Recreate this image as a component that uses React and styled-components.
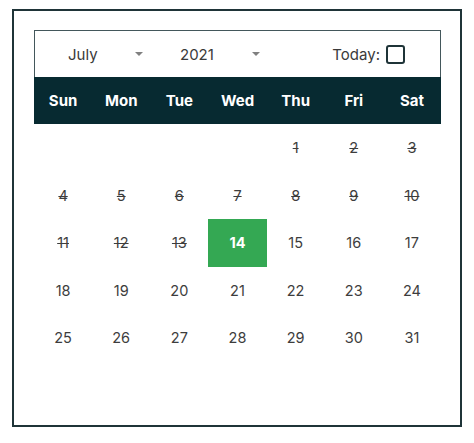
import styled, { createGlobalStyle } from "styled-components";

const GlobalStyle = createGlobalStyle`
    body {
        margin: 0;
        background: #ffffff;
        font-family: 'Inter', 'Liberation Sans', sans-serif;
    }
`

const Frame = styled.div`
    margin: 9px 0 0 12px;
    width: 450px;
    height: 418px;
    box-sizing: border-box;
    border: 2px solid #1f3438;
    padding: 19px 19px 0 20px;
    background: #fff;
`
const Header = styled.div`
    height: 47px;
    box-sizing: border-box;
    border: 1px solid #43575b;
    border-bottom: none;
    display: flex;
    align-items: center;
    padding-left: 33px;
    color: #3a3a3a;
    font-size: 15px;
`
const Select = styled.div`
    width: ${p => p.$width}px;
    margin-right: ${p => p.$gap || 0}px;
    display: flex;
    align-items: center;
    justify-content: space-between;
`
const Caret = styled.span`
    width: 0;
    height: 0;
    border-left: 4px solid transparent;
    border-right: 4px solid transparent;
    border-top: 4px solid #808080;
`
const Today = styled.label`
    margin-left: auto;
    margin-right: 35px;
    display: flex;
    align-items: center;
    gap: 6px;
`
const Checkbox = styled.span`
    width: 19px;
    height: 19px;
    box-sizing: border-box;
    border: 2px solid #1f3438;
    border-radius: 3px;
`
const WeekBar = styled.div`
    height: 47px;
    background: #072a31;
    display: grid;
    grid-template-columns: repeat(7, 1fr);
    align-items: center;
    color: #fff;
    font-weight: 700;
    font-size: 15px;
    text-align: center;
`
const Days = styled.div`
    display: grid;
    grid-template-columns: repeat(7, 1fr);
    grid-auto-rows: 47.5px;
`
const Day = styled.div`
    display: flex;
    align-items: center;
    justify-content: center;
    font-size: 14.5px;
    color: ${p => p.$active ? "#fff" : "#3d3d3d"};
    font-weight: ${p => p.$active ? 700 : 400};
    background: ${p => p.$active ? "#34a853" : "transparent"};
    text-decoration: ${p => p.$past ? "line-through" : "none"};
    grid-column-start: ${p => p.$start || "auto"};
`

const weekdays = ["Sun", "Mon", "Tue", "Wed", "Thu", "Fri", "Sat"];
const today = 14;
const days = Array.from({ length: 31 }, (_, i) => i + 1);

const App = () => {
  return (
    <>
      <GlobalStyle />
      <Frame>
        <Header>
          <Select $width={75} $gap={37}>
            <span>July</span>
            <Caret />
          </Select>
          <Select $width={80}>
            <span>2021</span>
            <Caret />
          </Select>
          <Today>
            Today:
            <Checkbox />
          </Today>
        </Header>
        <WeekBar>
          {weekdays.map(d => <span key={d}>{d}</span>)}
        </WeekBar>
        <Days>
          {days.map(d => (
            <Day
              key={d}
              $start={d === 1 ? 5 : null}
              $past={d < today}
              $active={d === today}
            >
              {d}
            </Day>
          ))}
        </Days>
      </Frame>
    </>
  )
}

export default App
